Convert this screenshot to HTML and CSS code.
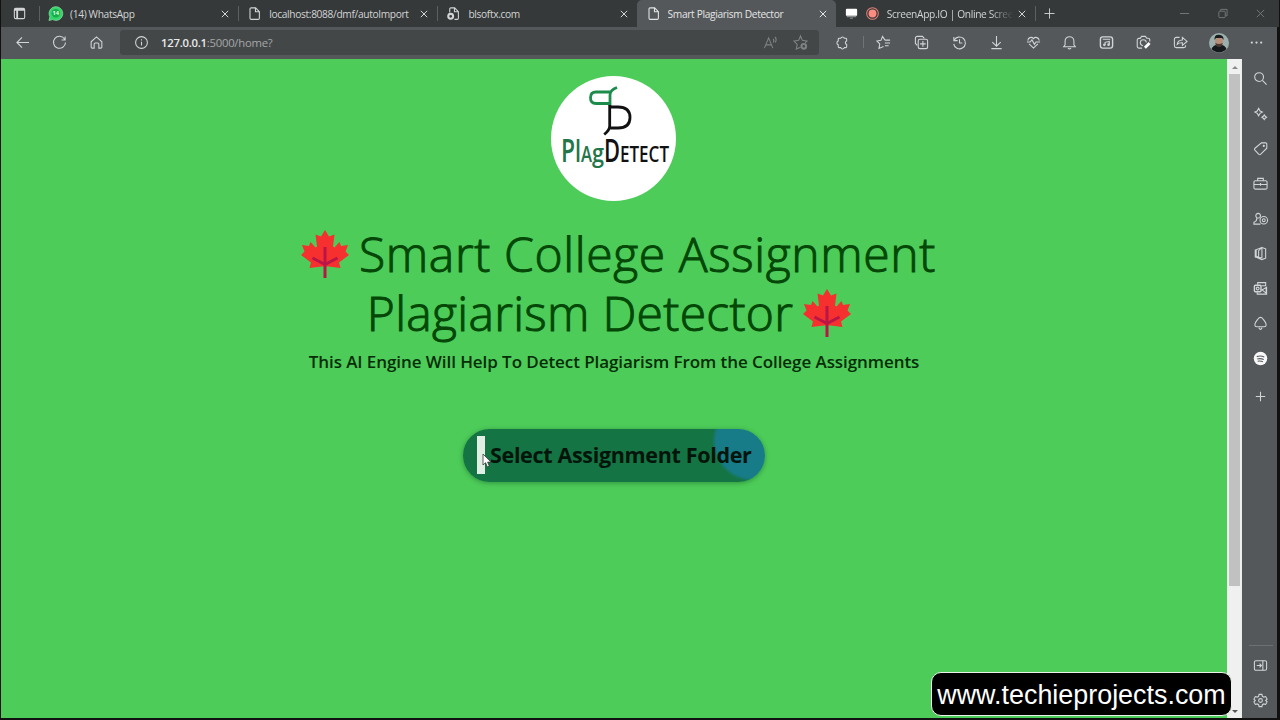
FILE: index.html
```html
<!DOCTYPE html>
<html lang="en">
<head>
    <meta charset="UTF-8">
    <meta name="viewport" content="width=device-width, initial-scale=1.0">
    <title>Smart Plagiarism Detector</title>
    <link rel="stylesheet" href="styles.css">
</head>
<body>
    <div class="window">
        <div class="tab-bar">
            <div class="tab-menu">
                <svg class="icon" viewBox="0 0 16 16"><rect x="2.500" y="2.500" width="11" height="11" rx="1.500"/><path d="M2.500 4h11M5.500 5v8" stroke-width="2"/></svg>
            </div>
            <div class="tab">
                <svg class="icon" viewBox="0 0 16 16"><path d="M1 15.500l1-4A7.300 7.300 0 1 1 5 14.500z" fill="#35d36b" stroke="#8fe8ab" stroke-width=".7"/><circle cx="8.300" cy="7.800" r="4.500" fill="#17ad48" stroke="none"/><text x="8.300" y="10" class="badge">14</text></svg>
                <span class="tab-title">(14) WhatsApp</span>
                <svg class="close" viewBox="0 0 8 8"><path d="M.8.8l6.4 6.4M7.2.8L.8 7.2"/></svg>
            </div>
            <div class="tab">
                <svg class="icon" viewBox="0 0 16 16"><path d="M4.500 2h4.700l4 4v7a1.300 1.300 0 0 1-1.300 1.300H4.500A1.300 1.300 0 0 1 3.200 13V3.300A1.300 1.300 0 0 1 4.500 2zM9 2v4.200h4.200"/></svg>
                <span class="tab-title">localhost:8088/dmf/autoImport</span>
                <svg class="close" viewBox="0 0 8 8"><path d="M.8.8l6.4 6.4M7.2.8L.8 7.2"/></svg>
            </div>
            <div class="tab">
                <svg class="icon" viewBox="0 0 16 16"><path d="M4 7V3.300A1.300 1.300 0 0 1 5.300 2h3.900l4 4v7a1.300 1.300 0 0 1-1.300 1.300H9M9 2v4.200h4.200"/><circle cx="5" cy="11" r="2.600" stroke-width="2.200"/></svg>
                <span class="tab-title">blsoftx.com</span>
                <svg class="close" viewBox="0 0 8 8"><path d="M.8.8l6.4 6.4M7.2.8L.8 7.2"/></svg>
            </div>
            <div class="tab active">
                <svg class="icon" viewBox="0 0 16 16"><path d="M4.500 2h4.700l4 4v7a1.300 1.300 0 0 1-1.300 1.300H4.500A1.300 1.300 0 0 1 3.200 13V3.300A1.300 1.300 0 0 1 4.500 2zM9 2v4.200h4.200"/></svg>
                <span class="tab-title">Smart Plagiarism Detector</span>
                <svg class="close" viewBox="0 0 8 8"><path d="M.8.8l6.4 6.4M7.2.8L.8 7.2"/></svg>
            </div>
            <div class="tab recording">
                <svg class="icon" viewBox="0 0 16 16"><rect x="2" y="3" width="12" height="7.500" rx="1" fill="#fff" stroke="none"/><path d="M3 11.300h10M6.500 13h3" stroke="#8b8e90"/></svg>
                <svg class="icon" viewBox="0 0 16 16"><circle cx="8" cy="8" r="4.200" fill="#ff8c80" stroke="none"/><circle cx="8" cy="8" r="6.200" stroke="#e08078"/></svg>
                <span class="tab-title faded">ScreenApp.IO | Online Scree</span>
                <svg class="close" viewBox="0 0 8 8"><path d="M.8.8l6.4 6.4M7.2.8L.8 7.2"/></svg>
            </div>
            <div class="new-tab">
                <svg viewBox="0 0 12 12"><path d="M6 .5v11M.5 6h11"/></svg>
            </div>
            <div class="window-controls">
                <svg viewBox="0 0 12 12"><path d="M1 6h10"/></svg>
                <svg viewBox="0 0 12 12"><rect x="2" y="3.500" width="7" height="7" rx="1"/><path d="M4 3V1.500h7v7H9.500"/></svg>
                <svg viewBox="0 0 12 12"><path d="M2 2l8 8M10 2l-8 8"/></svg>
            </div>
        </div>

        <div class="toolbar">
            <div class="nav-buttons">
                <svg class="icon" viewBox="0 0 16 16"><path d="M15 8H2M7.500 2.500L2 8l5.500 5.500"/></svg>
                <svg class="icon" viewBox="0 0 16 16"><path d="M13.500 4.500A6.400 6.400 0 1 0 14.400 8M14 1.500v3.800h-3.800"/></svg>
                <svg class="icon" viewBox="0 0 16 16"><path d="M2.300 7.200L8 2l5.700 5.200v5.600a1.200 1.200 0 0 1-1.200 1.200h-2V9.800a1.200 1.200 0 0 0-1.200-1.200H6.700a1.200 1.200 0 0 0-1.200 1.200V14h-2a1.200 1.200 0 0 1-1.200-1.200z"/></svg>
            </div>
            <div class="address-bar">
                <svg class="icon" viewBox="0 0 16 16"><circle cx="8" cy="8" r="6.300"/><path d="M8 7.200v4M8 4.500v1.300"/></svg>
                <span class="url"><b>127.0.0.1</b>:5000/home?</span>
                <svg class="icon dim" viewBox="0 0 16 16"><path d="M1.500 14L6 3l4.500 11M3 10.500h6M11 4q1 2 0 4M13 2q2 3 0 6"/></svg>
                <svg class="icon dim" viewBox="0 0 16 16"><path d="M8 13l-4.500 2 1-5L1 6.500l5-.8L8 1l2 4.700 5 .8-2 2"/><circle cx="11.500" cy="12" r="2.500" stroke-width="2.200"/></svg>
            </div>
            <div class="extension">
                <svg class="icon" viewBox="0 0 16 16"><path d="M5.500 3.500h1.700a2 2 0 0 1 3.800 0h1.500a1 1 0 0 1 1 1v2a1.800 1.800 0 0 0 0 3.500v2.500a1 1 0 0 1-1 1H11a2 2 0 0 1-3.800 0H5.500a1 1 0 0 1-1-1v-2.200a2 2 0 0 1 0-3.800v-2a1 1 0 0 1 1-1z"/></svg>
            </div>
            <div class="tools">
                <svg class="icon" viewBox="0 0 16 16"><path d="M9.500 5.500L7 1.500 5.300 5.700l-4.300.7L4 9.500l-.8 4.800 4.800-2M9.500 5.500H15M9.500 8.500H15M9.500 11.500h4"/></svg>
                <svg class="icon" viewBox="0 0 16 16"><path d="M3.500 11L1.500 9V3.500a2 2 0 0 1 2-2H9l2 2"/><rect x="4.500" y="4.500" width="10" height="10" rx="1.800"/><path d="M9.500 6.500v6M6.500 9.500h6"/></svg>
                <svg class="icon" viewBox="0 0 16 16"><path d="M2 2v4h4M2.200 6A6.300 6.300 0 1 1 1.800 9.500M8 4.500v4h3"/></svg>
                <svg class="icon" viewBox="0 0 16 16"><path d="M8 1v10.500M3.500 7.500L8 12l4.500-4.500M2.500 14.500h11"/></svg>
                <svg class="icon" viewBox="0 0 16 16"><path d="M3.300 9.500L8 14l4.700-4.500M2 6A3.400 3.400 0 0 1 8 3.800 3.400 3.400 0 0 1 14 6M1 7.500h3.500L6.300 5l2.700 5 1.700-2.500H15"/></svg>
                <svg class="icon" viewBox="0 0 16 16"><path d="M3.300 10.500V6.500a4.700 4.700 0 0 1 9.400 0v4l1.500 2H1.800zM6.300 14q1.700 1.700 3.400 0"/></svg>
                <svg class="icon" viewBox="0 0 16 16"><rect x="1.500" y="2" width="13" height="12" rx="2.500" stroke-width="1.500"/><path d="M4 4.500h8M6.500 10.500V7.800l4.500-1v3.500"/><circle cx="5.700" cy="10.500" r=".8"/><circle cx="10.200" cy="10.300" r=".8"/></svg>
                <svg class="icon" viewBox="0 0 16 16"><path d="M6.500 14H3a1.700 1.700 0 0 1-1.700-1.700v-7A1.700 1.700 0 0 1 3 3.600h1.500L6 1.500h4l1.500 2H13a1.700 1.700 0 0 1 1.700 1.700V7"/><path d="M11 8A3.200 3.200 0 1 0 7.500 11.400"/><path d="M9.500 13.500l5-5" stroke="#fff" stroke-width="3"/></svg>
                <svg class="icon" viewBox="0 0 16 16"><path d="M7 2.500H3.500a2 2 0 0 0-2 2v7a2 2 0 0 0 2 2h8a2 2 0 0 0 2-2V11"/><path d="M4.500 10q.5-4.500 5.500-4.700V2.500L15 6.800 10 11V8.300Q6.500 8 4.500 10z"/></svg>
                <svg class="avatar" viewBox="0 0 20 20"><circle cx="10" cy="10" r="10" fill="#9bafad"/><path d="M2.500 16q2-4 5-4h5q3 0 5 4A10 10 0 0 1 2.500 16z" fill="#15191b"/><ellipse cx="10" cy="8.500" rx="4" ry="5" fill="#b98e79"/><path d="M5.500 7Q5 1.500 10 1.700T14.500 7L13 5H7z" fill="#1a1b1c"/><path d="M6.300 10q3.700 2 7.400 0-.5 4-3.700 4t-3.700-4z" fill="#4a3832"/></svg>
                <svg class="icon" viewBox="0 0 16 16"><g fill="currentColor" stroke="none"><circle cx="3" cy="8" r="1.200"/><circle cx="8" cy="8" r="1.200"/><circle cx="13" cy="8" r="1.200"/></g></svg>
            </div>
        </div>

        <div class="content">
            <main class="page">
                <svg class="logo" viewBox="0 0 125 125">
                    <circle cx="62.500" cy="62.500" r="62.500" fill="#fff"/>
                    <g fill="none" stroke-width="2.800">
                        <path d="M66 11.500Q59 14 59 19V30M59 16H45q-5.500 0-5.500 5.700T45 27.500h14" stroke="#1c8c4b"/>
                        <path d="M58.700 29V50q0 4-5.500 8.500M59 31h8q12 0 12 10.500T67 52h-9" stroke="#111"/>
                    </g>
                    <g class="logo-text">
                        <g fill="#23764a">
                            <text x="10" y="86" font-size="32" textLength="14" lengthAdjust="spacingAndGlyphs">P</text>
                            <text x="24" y="86" font-size="30" textLength="6" lengthAdjust="spacingAndGlyphs">l</text>
                            <text x="30" y="86" font-size="22" textLength="11" lengthAdjust="spacingAndGlyphs">A</text>
                            <text x="41" y="86" font-size="25" textLength="12" lengthAdjust="spacingAndGlyphs">g</text>
                        </g>
                        <text x="53" y="86" font-size="32" textLength="16" lengthAdjust="spacingAndGlyphs">D</text>
                        <text x="69" y="86" font-size="22" textLength="49" lengthAdjust="spacingAndGlyphs">ETECT</text>
                    </g>
                </svg>

                <h1>
                    <span class="line first"><svg class="leaf" viewBox="0 0 48 48"><path d="M24 0l4 6.500 5.500-2-1.500 12 1.500 1 5-5.500 1.500 4 7-1-2.500 6.500 3.500 3.500-10 7.500 1.500 5.500-12-1.500h-7l-12 1.500 1.500-5.500L0 25l3.500-3.500L1 15l7 1 1.500-4 5 5.500 1.500-1-1.500-12 5.500 2z" fill="#f5302f"/><path d="M24 17v31M24 34.500l-12.500-6.500M24 34.500l12.500-6.500" fill="none" stroke="#b91546" stroke-width="3"/></svg> <span>Smart College Assignment</span></span>
                    <span class="line second"><span>Plagiarism Detector</span> <svg class="leaf" viewBox="0 0 48 48"><path d="M24 0l4 6.500 5.500-2-1.500 12 1.500 1 5-5.500 1.500 4 7-1-2.500 6.500 3.500 3.500-10 7.500 1.500 5.500-12-1.500h-7l-12 1.500 1.500-5.500L0 25l3.500-3.500L1 15l7 1 1.500-4 5 5.500 1.500-1-1.500-12 5.500 2z" fill="#f5302f"/><path d="M24 17v31M24 34.500l-12.500-6.500M24 34.500l12.500-6.500" fill="none" stroke="#b91546" stroke-width="3"/></svg></span>
                </h1>
                <p class="description">This AI Engine Will Help To Detect Plagiarism From the College Assignments</p>

                <button class="select-folder"><span class="file-input"></span><span class="label">Select Assignment Folder</span></button>
            </main>

            <div class="scrollbar">
                <span class="arrow up"></span>
                <div class="thumb"></div>
                <span class="arrow down"></span>
            </div>

            <aside class="sidebar">
                <svg class="icon" viewBox="0 0 16 16"><circle cx="6.500" cy="6.500" r="4.700"/><path d="M10 10l4.500 4.500"/></svg>
                <svg class="icon" viewBox="0 0 16 16"><path d="M6 2.500l1.500 2.800L10 6.500 7.500 7.800 6 10.500 4.500 7.800 2 6.500l2.500-1.200zM12 9.500l1 1.500 1.500 1-1.500 1-1 1.500-1-1.500-1.500-1 1.500-1z"/></svg>
                <svg class="icon" viewBox="0 0 16 16"><path d="M9 2h4.500a1.200 1.200 0 0 1 1.200 1.200v4.500L8 14.300a1.200 1.200 0 0 1-1.700 0L1.800 9.500a1.200 1.200 0 0 1 0-1.500z"/><circle cx="11.500" cy="5.200" r=".6"/></svg>
                <svg class="icon" viewBox="0 0 16 16"><rect x="1" y="5" width="14" height="9" rx="1.500"/><path d="M5 5V2.500h6V5M1 9h14M8 7.500v3"/></svg>
                <svg class="icon" viewBox="0 0 16 16"><path d="M4 7a2.500 2.500 0 1 1 3 0M3.500 7.500H7M4 8q0 3-3 4v2h7"/><circle cx="11.500" cy="9.800" r="4"/><circle cx="11.500" cy="9.800" r="1.500"/></svg>
                <svg class="icon" viewBox="0 0 16 16"><path d="M9.500 1.500l4 1.500v10l-4 1.500-6-2.500 6 .5zM9.500 1.500L3 4v8l3-1V5z"/><path d="M2.800 4v8" stroke-width="2"/></svg>
                <svg class="icon" viewBox="0 0 16 16"><path d="M5 4V1.700h8.500v4M14.500 6v8h-10v-2M9 5h5M9 9l5 4V7l-5 3"/><rect x="1.500" y="4.500" width="7" height="7" rx="1" stroke-width="1.500"/><circle cx="5" cy="8" r="1.500"/></svg>
                <svg class="icon" viewBox="0 0 16 16"><path d="M8 1.500q1.500 0 2.500 1.500Q14 7 14 9.500q0 2-2 2H4q-2 0-2-2Q2 7 5.500 3 6.500 1.500 8 1.500zM6.300 12.500q1.700 3.500 3.400 0"/></svg>
                <svg class="icon" viewBox="0 0 16 16"><circle cx="8" cy="8" r="7.200" fill="#f8f8f8" stroke="none"/><path d="M4 6q4-1.500 8 .3M4.500 8.500q3.500-1 7 .5M5 11q3-.7 5.500.5" stroke="#555a5d"/></svg>
                <svg class="icon add" viewBox="0 0 16 16"><path d="M8 3v10M3 8h10"/></svg>
                <div class="sidebar-footer">
                    <svg class="icon" viewBox="0 0 16 16"><rect x="1.500" y="3" width="13" height="10" rx="1.500"/><path d="M10.500 3v10M4 8h5M7 6l2 2-2 2"/></svg>
                    <svg class="icon" viewBox="0 0 16 16"><path d="M6.500 1.500h3l.5 2 1.500.9 2-.6L15 6.500 13.500 8l1.500 1.500-1.500 2.700-2-.6-1.500.9-.5 2h-3l-.5-2-1.500-.9-2 .6L1 9.500 2.500 8 1 6.500l1.500-2.700 2 .6L6 3.500z"/><circle cx="8" cy="8" r="2"/></svg>
                </div>
            </aside>
        </div>

        <svg class="cursor" viewBox="0 0 10 16"><path d="M1 1v11l2.600-2.300L5.300 14l2-.9-1.700-4H9z" fill="#fff" stroke="#333" stroke-width=".8"/></svg>
        <div class="watermark">www.techieprojects.com</div>
    </div>
</body>
</html>
```

FILE: styles.css
```css
:root {
    --tab-bar: #36393a;
    --toolbar: #54585b;
    --field: #444748;
    --page: #4dcc59;
    --icon-color: #d2d4d5;
}

* {
    box-sizing: border-box;
}

body {
    margin: 0;
    background-color: #111;
    font-family: "Open Sans", "Noto Sans", sans-serif;
    overflow: hidden;
}

.window {
    position: relative;
    display: flex;
    flex-direction: column;
    width: 1280px;
    height: 720px;
    padding: 0 3px 2px 1px;
    color: var(--icon-color);
}

svg {
    flex: none;
    fill: none;
    stroke: currentColor;
    overflow: visible;
}

svg text {
    stroke: none;
}

.icon {
    width: 15px;
    height: 15px;
    stroke-width: 1.15;
}

/* tabs */
.tab-bar {
    display: flex;
    height: 27px;
    background-color: var(--tab-bar);
    margin-right: -2px;
}

.tab-menu {
    display: flex;
    align-items: center;
    width: 38px;
    padding-left: 11px;
}

.tab {
    display: flex;
    align-items: center;
    width: 199.2px;
    height: 27px;
    padding: 0 9px;
    font-size: 10.2px;
    background: linear-gradient(#5d6061, #5d6061) 0 6px / 1px 15px no-repeat;
}

.tab-title {
    flex: 1;
    margin: 0 4px 0 7px;
    overflow: hidden;
    white-space: nowrap;
    letter-spacing: -0.34px;
}

.tab.active {
    background: var(--toolbar);
    border-radius: 5px 5px 0 0;
    color: #e4e5e5;
}

.tab.recording {
    background: none;
    gap: 6px;
    padding-left: 8px;
}

.tab.recording .tab-title {
    margin: 0 -4px 0 1px;
}

.faded {
    -webkit-mask-image: linear-gradient(90deg, #000 80%, transparent 98%);
    mask-image: linear-gradient(90deg, #000 80%, transparent 98%);
}

.close {
    width: 8px;
    height: 8px;
}

.badge {
    fill: #e5ffe9;
    font-size: 6px;
    font-weight: bold;
    text-anchor: middle;
}

.new-tab {
    display: flex;
    align-items: center;
    width: 28px;
    padding-left: 9px;
    background: linear-gradient(#5d6061, #5d6061) 0 6px / 1px 15px no-repeat;
}

.new-tab svg {
    width: 11px;
}

.window-controls {
    display: flex;
    align-items: center;
    gap: 27px;
    margin-left: auto;
    margin-right: 13px;
    color: #777b7c;
}

.window-controls svg {
    width: 11px;
}

/* toolbar */
.toolbar {
    display: flex;
    align-items: center;
    height: 32px;
    padding-bottom: 1px;
    background-color: var(--toolbar);
}

.nav-buttons {
    display: flex;
    justify-content: space-between;
    width: 119px;
    padding: 0 16px 0 14px;
}

.address-bar {
    display: flex;
    align-items: center;
    width: 699px;
    height: 25px;
    padding: 0 11px 0 14px;
    border-radius: 3px;
    background-color: var(--field);
}

.address-bar .icon + .icon {
    margin-left: 15px;
}

.url {
    flex: 1;
    margin-left: 12px;
    font-size: 11.3px;
    letter-spacing: -0.25px;
    color: #a5a8a9;
}

.url b {
    font-weight: 600;
    color: #e8e9e9;
}

.dim {
    color: #7e8283;
}

.extension {
    display: flex;
    justify-content: center;
    width: 45px;
    background: linear-gradient(#707476, #707476) 100% 1px / 1px 12px no-repeat;
}

.tools {
    display: flex;
    flex: 1;
    align-items: center;
    justify-content: space-between;
    padding: 0 13px 0 12px;
}

.avatar {
    width: 20px;
    height: 20px;
    margin: 0 -2.5px;
    stroke: none;
}

.tools .icon:nth-child(n + 5):nth-child(-n + 9) {
    margin: 0 0.5px 0 -1.5px;
}

/* page */
.content {
    display: flex;
    flex: 1;
    min-height: 0;
}

.page {
    display: flex;
    flex-direction: column;
    align-items: center;
    width: 1226px;
    padding-top: 17px;
    background-color: var(--page);
    color: #054707;
}

.logo {
    width: 125px;
    height: 125px;
    margin-right: 1px;
    stroke: none;
}

.logo-text {
    font-family: "Open Sans", sans-serif;
    font-weight: 600;
    fill: #111;
}

h1 {
    margin: 23px 0 0;
    font-size: 48px;
    font-weight: 300;
    line-height: 59px;
    -webkit-text-stroke: 1px currentColor;
}

.line {
    display: flex;
    align-items: center;
    justify-content: center;
    gap: 10px;
    height: 59px;
    white-space: nowrap;
}

.line.first {
    margin-left: 9px;
    letter-spacing: 0.63px;
}

.line.second {
    margin-right: 10px;
    letter-spacing: 0.3px;
}

.leaf {
    width: 48px;
    height: 48px;
    stroke: none;
}

.description {
    margin: 7px 0 0;
    font-size: 17px;
    font-weight: 600;
    line-height: 25px;
    letter-spacing: -0.07px;
    color: #062d08;
    white-space: nowrap;
}

.select-folder {
    display: flex;
    align-items: center;
    width: 302px;
    height: 53px;
    margin-top: 55px;
    padding: 0 14px 2px;
    border: none;
    border-radius: 27px;
    background: radial-gradient(circle at 290px 12px, #177b88 37px, #147443 41px);
    box-shadow: 0 1px 5px rgba(0, 60, 20, 0.4);
    color: #03150a;
    font-family: inherit;
    font-size: 21.5px;
    font-weight: 700;
    letter-spacing: -0.33px;
    white-space: nowrap;
}

.file-input {
    flex: none;
    width: 8px;
    height: 38px;
    margin-right: 5px;
    background-color: #e0eee4;
}

/* scrollbar */
.scrollbar {
    display: flex;
    flex-direction: column;
    align-items: center;
    width: 15px;
    border: solid #e9eeea;
    border-width: 0 1px;
    background-color: #f0f0f0;
}

.thumb {
    width: 11px;
    height: 512px;
    background-color: #c1c1c1;
}

.arrow {
    width: 0;
    height: 0;
    border: 3px solid transparent;
}

.arrow.up {
    margin: 4px 0 5px;
    border-bottom-color: #888;
}

.arrow.down {
    margin-top: auto;
    margin-bottom: 2px;
    border-top-color: #555;
}

/* sidebar */
.sidebar {
    display: flex;
    flex: 1;
    flex-direction: column;
    align-items: center;
    gap: 20px;
    padding: 11.5px 0 0 2px;
    background-color: var(--toolbar);
}

.sidebar .add {
    margin-top: 3px;
}

.sidebar-footer {
    display: flex;
    flex-direction: column;
    align-items: center;
    gap: 20px;
    width: 24px;
    margin-top: auto;
    padding: 12px 0 10px;
    border-top: 1px solid #6d7173;
}

.cursor {
    position: absolute;
    left: 482px;
    top: 453px;
    width: 10px;
    height: 16px;
}

.watermark {
    position: absolute;
    left: 931px;
    top: 672px;
    width: 301px;
    height: 44px;
    border: 1px solid #e8f5e8;
    border-radius: 10px;
    background-color: #000;
    color: #fff;
    font: 26.9px/44px "Liberation Sans", Arial, sans-serif;
    text-align: center;
}
```
